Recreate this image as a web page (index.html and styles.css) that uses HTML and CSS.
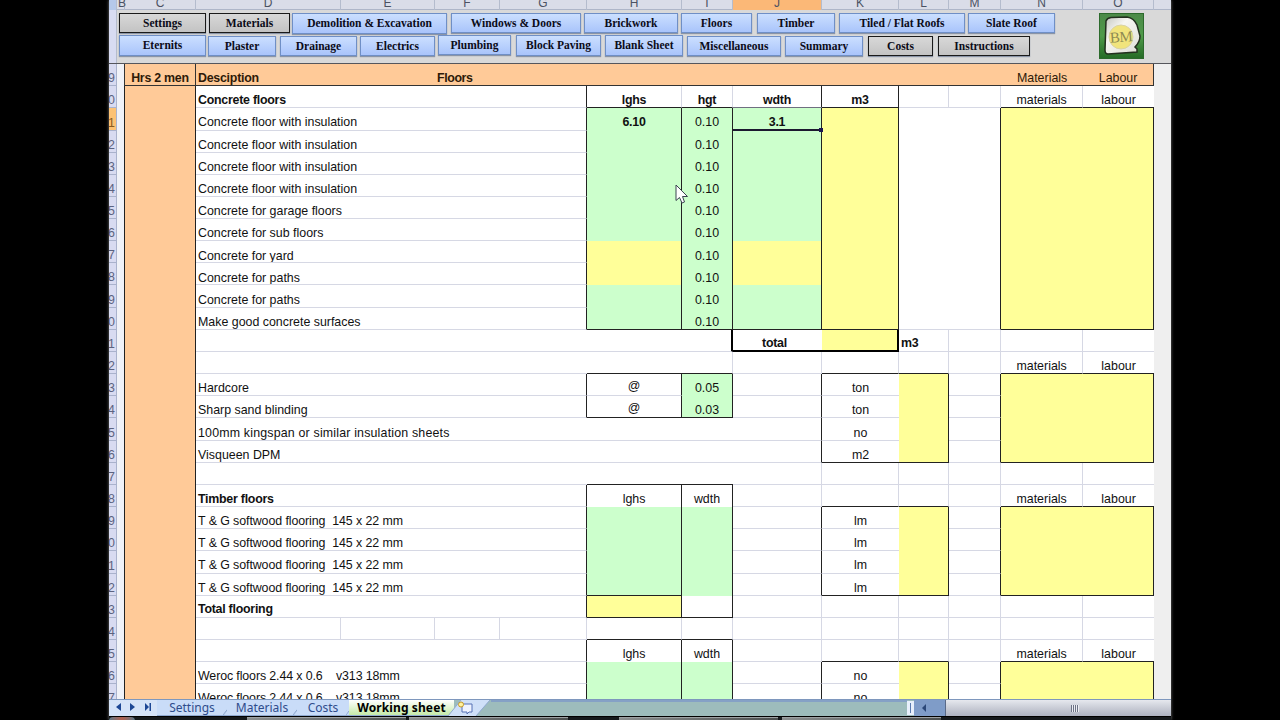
FILE: index.html
```html
<!DOCTYPE html>
<html lang="en">

<head>
    <meta charset="utf-8">
    <title>Working sheet</title>
    <link rel="stylesheet" href="styles.css">
</head>

<body>
    <div class="window">
        <!-- column letters -->
        <div class="letters">
            <span class="wHead"></span><span class="wB">B</span><span class="wC">C</span><span class="wD">D</span><span class="wE">E</span><span class="wF">F</span><span class="wG">G</span><span class="wH">H</span><span class="wI">I</span><span class="wJ active">J</span><span class="wK">K</span><span class="wL">L</span><span class="wM">M</span><span class="wN">N</span><span class="wO">O</span>
        </div>

        <!-- navigation buttons -->
        <div class="toolbar">
            <div class="rowHead"></div>
            <div class="buttons">
                <div class="line">
                    <a class="btn grey b1">Settings</a>
                    <a class="btn grey b2">Materials</a>
                    <a class="btn b3">Demolition &amp; Excavation</a>
                    <a class="btn b4">Windows &amp; Doors</a>
                    <a class="btn b5">Brickwork</a>
                    <a class="btn b6">Floors</a>
                    <a class="btn b7">Timber</a>
                    <a class="btn b8">Tiled / Flat Roofs</a>
                    <a class="btn b9">Slate Roof</a>
                </div>
                <div class="line">
                    <a class="btn b10">Eternits</a>
                    <a class="btn b11">Plaster</a>
                    <a class="btn b12">Drainage</a>
                    <a class="btn b13">Electrics</a>
                    <a class="btn b14">Plumbing</a>
                    <a class="btn b15">Block Paving</a>
                    <a class="btn b16">Blank Sheet</a>
                    <a class="btn b17">Miscellaneous</a>
                    <a class="btn b18">Summary</a>
                    <a class="btn grey b19">Costs</a>
                    <a class="btn grey b20">Instructions</a>
                </div>
            </div>
            <svg class="logo" width="45" height="46" viewBox="0 0 45 46">
                <defs>
                    <linearGradient id="green" x1="0" y1="0" x2="0" y2="1">
                        <stop offset="0" stop-color="#4c8a48" />
                        <stop offset=".5" stop-color="#4f9a4a" />
                        <stop offset="1" stop-color="#256b26" />
                    </linearGradient>
                    <linearGradient id="steel" x1="0" y1="0" x2="1" y2="1">
                        <stop offset="0" stop-color="#c4c6c0" />
                        <stop offset=".35" stop-color="#f6f6f2" />
                        <stop offset="1" stop-color="#dcddd6" />
                    </linearGradient>
                </defs>
                <rect x=".5" y=".5" width="44" height="45" fill="url(#green)" stroke="#2c6a2c" />
                <path d="M7 8Q8 5 12 4.500L28 4Q35 5 38 12L41 23Q41 29 36 34L38 36V39L9 41Q6 41 6 37Z" fill="url(#steel)" stroke="#23301f" stroke-width="1.500" />
                <circle cx="22" cy="24" r="12" fill="#f1e47c" stroke="#d9d3a2" />
                <text x="22" y="29" text-anchor="middle" class="logoText" transform="rotate(-4 22 24)">BM</text>
            </svg>
        </div>

        <!-- sheet -->
        <div class="sheet">
            <table>
                <colgroup>
                    <col class="wHead"><col class="wB"><col class="wC"><col class="wD"><col class="wE"><col class="wF"><col class="wG"><col class="wH"><col class="wI"><col class="wJ"><col class="wK"><col class="wL"><col class="wM"><col class="wN"><col class="wO">
                </colgroup>
                <tr class="title">
                    <th>9</th><td class="b kr"></td><td class="kr">Hrs 2 men</td><td colspan="2" class="left">Desciption</td><td colspan="8" class="left floors">Floors</td><td class="n">Materials</td><td class="n kr">Labour</td>
                </tr>
                <tr>
                    <th>0</th><td class="b kr" rowspan="28"></td><td class="hrs" rowspan="28"></td><td colspan="4" class="left bold kr">Concrete floors</td><td class="bold kb">lghs</td><td class="bold kb">hgt</td><td class="bold kb kr">wdth</td><td class="bold kb kr">m3</td><td></td><td></td><td class="kb">materials</td><td class="kb nr">labour</td>
                </tr>
                <tr class="tall up">
                    <th class="active">1</th><td colspan="4" class="left kr">Concrete floor with insulation</td><td class="g bold kr">6.10</td><td class="g kr">0.10</td><td class="g bold selected kr">3.1<i class="handle"></i></td><td class="y kr kb" rowspan="10"></td><td colspan="2" rowspan="10" class="kr"></td><td colspan="2" rowspan="10" class="y kr kb"></td>
                </tr>
                <tr>
                    <th>2</th><td colspan="4" class="left kr">Concrete floor with insulation</td><td class="g kr" rowspan="5"></td><td class="g kr">0.10</td><td class="g kr" rowspan="5"></td>
                </tr>
                <tr>
                    <th>3</th><td colspan="4" class="left kr">Concrete floor with insulation</td><td class="g kr">0.10</td>
                </tr>
                <tr>
                    <th>4</th><td colspan="4" class="left kr">Concrete floor with insulation</td><td class="g kr">0.10</td>
                </tr>
                <tr>
                    <th>5</th><td colspan="4" class="left kr">Concrete for garage floors</td><td class="g kr">0.10</td>
                </tr>
                <tr>
                    <th>6</th><td colspan="4" class="left kr">Concrete for sub floors</td><td class="g kr">0.10</td>
                </tr>
                <tr>
                    <th>7</th><td colspan="4" class="left kr low">Concrete for yard</td><td class="y kr" rowspan="2"></td><td class="g kr low">0.10</td><td class="y kr" rowspan="2"></td>
                </tr>
                <tr>
                    <th>8</th><td colspan="4" class="left kr low">Concrete for paths</td><td class="g kr low">0.10</td>
                </tr>
                <tr class="tall">
                    <th>9</th><td colspan="4" class="left kr">Concrete for paths</td><td class="g kr kb" rowspan="2"></td><td class="g kr">0.10</td><td class="g kr kb" rowspan="2"></td>
                </tr>
                <tr>
                    <th>0</th><td colspan="4" class="left kr">Make good concrete surfaces</td><td class="g kr kb last">0.10</td>
                </tr>
                <tr class="up">
                    <th>1</th><td colspan="6" class="thickR"></td><td class="bold thickB nr total">total</td><td class="y thickB thickR"></td><td class="left bold">m3</td><td></td><td></td><td class="nr"></td>
                </tr>
                <tr>
                    <th>2</th><td colspan="4" class="nr"></td><td class="nr kb"></td><td class="kb"></td><td></td><td class="kb"></td><td class="kb"></td><td></td><td class="kb">materials</td><td class="kb nr">labour</td>
                </tr>
                <tr>
                    <th>3</th><td colspan="4" class="left kr">Hardcore</td><td class="kr at">@</td><td class="g kr">0.05</td><td class="kr"></td><td class="nr">ton</td><td class="y kr kb" rowspan="4"></td><td class="kr"></td><td colspan="2" rowspan="4" class="y kr kb"></td>
                </tr>
                <tr>
                    <th>4</th><td colspan="4" class="left kr">Sharp sand blinding</td><td class="kr kb at">@</td><td class="g kr kb last">0.03</td><td class="kr"></td><td class="nr">ton</td><td class="kr"></td>
                </tr>
                <tr class="tall">
                    <th>5</th><td colspan="6" class="left nr wide">100mm kingspan or similar insulation sheets</td><td class="kr"></td><td class="nr">no</td><td class="kr"></td>
                </tr>
                <tr>
                    <th>6</th><td colspan="6" class="left nr">Visqueen DPM</td><td class="kr"></td><td class="nr kb">m2</td><td class="kr"></td>
                </tr>
                <tr>
                    <th>7</th><td colspan="4" class="nr"></td><td class="nr kb"></td><td class="nr kb"></td><td></td><td></td><td></td><td></td><td></td><td class="nr"></td>
                </tr>
                <tr>
                    <th>8</th><td colspan="4" class="left bold kr">Timber floors</td><td class="kr nb">lghs</td><td class="kr nb">wdth</td><td></td><td class="kb"></td><td class="kb"></td><td></td><td class="kb">materials</td><td class="kb nr">labour</td>
                </tr>
                <tr>
                    <th>9</th><td colspan="4" class="left kr narrow">T &amp; G softwood flooring&nbsp; 145 x 22 mm</td><td class="g kr kb" rowspan="4"></td><td class="g kr" rowspan="4"></td><td class="kr"></td><td class="nr">lm</td><td class="y kr kb" rowspan="4"></td><td class="kr"></td><td colspan="2" rowspan="4" class="y kr kb"></td>
                </tr>
                <tr>
                    <th>0</th><td colspan="4" class="left kr narrow">T &amp; G softwood flooring&nbsp; 145 x 22 mm</td><td class="kr"></td><td class="nr">lm</td><td class="kr"></td>
                </tr>
                <tr class="tall up">
                    <th>1</th><td colspan="4" class="left kr narrow">T &amp; G softwood flooring&nbsp; 145 x 22 mm</td><td class="kr"></td><td class="nr">lm</td><td class="kr"></td>
                </tr>
                <tr>
                    <th>2</th><td colspan="4" class="left kr narrow">T &amp; G softwood flooring&nbsp; 145 x 22 mm</td><td class="kr"></td><td class="nr kb">lm</td><td class="kr"></td>
                </tr>
                <tr class="up">
                    <th>3</th><td colspan="4" class="left bold kr">Total flooring</td><td class="y kr kb"></td><td class="kr kb"></td><td></td><td></td><td></td><td></td><td></td><td class="nr"></td>
                </tr>
                <tr>
                    <th>4</th><td></td><td></td><td></td><td></td><td class="kb"></td><td class="kb"></td><td></td><td></td><td></td><td></td><td></td><td class="nr"></td>
                </tr>
                <tr>
                    <th>5</th><td colspan="4" class="kr"></td><td class="kr nb">lghs</td><td class="kr nb">wdth</td><td></td><td class="kb"></td><td class="kb"></td><td></td><td class="kb">materials</td><td class="kb nr">labour</td>
                </tr>
                <tr>
                    <th>6</th><td colspan="4" class="left kr narrower">Weroc floors 2.44 x 0.6&nbsp; &nbsp; v313 18mm</td><td class="g kr" rowspan="2"></td><td class="g kr" rowspan="2"></td><td class="kr"></td><td class="nr">no</td><td class="y kr" rowspan="2"></td><td class="kr"></td><td colspan="2" rowspan="2" class="y kr"></td>
                </tr>
                <tr>
                    <th>7</th><td colspan="4" class="left kr narrower">Weroc floors 2.44 x 0.6&nbsp; &nbsp; v313 18mm</td><td class="kr"></td><td class="nr">no</td><td class="kr"></td>
                </tr>
            </table>
        </div>

        <!-- sheet tabs and scrollbar -->
        <div class="tabs">
            <svg class="arrows" width="48" height="16" viewBox="0 0 48 16">
                <path d="M12 3v8l-5-4zM21 3v8l5-4zM36 3v8l4-4zM40.500 3h1.500v8H40.500z" fill="#1d4795" />
            </svg>
            <div class="tab t1">Settings</div>
            <div class="tab t2">Materials</div>
            <div class="tab t3">Costs</div>
            <div class="tab t4 current">Working sheet</div>
            <svg class="newTab" width="43" height="16" viewBox="0 0 43 16">
                <path d="M0 16L13 0H42L28 16z" fill="#cfe0f8" />
                <path d="M0 16L13 0M28 16L42 0" stroke="#8fa9d0" fill="none" />
                <path d="M14 4h10v8h-3l-2 2v-2h-5z" fill="#eef3ff" stroke="#5570b4" />
                <circle cx="13" cy="4.500" r="2.500" fill="#fff2a0" stroke="#c79b27" />
            </svg>
            <div class="space"></div>
            <div class="splitter"></div>
            <div class="scrollLeft"></div>
            <div class="scrollbar"><span></span></div>
        </div>
        <div class="taskbar">
            <div class="start"></div>
            <div class="task k1"></div>
            <div class="task k2"></div>
            <div class="task k3"></div>
            <div class="task k4"></div>
        </div>
    </div>

    <!-- mouse pointer -->
    <svg class="pointer" width="14" height="20" viewBox="0 0 14 20">
        <path d="M1 1V16.500L4.500 13.500L7 19L9.500 18L7.500 12.500H12.500z" fill="#fff" stroke="#3a4450" />
    </svg>
</body>

</html>
```
FILE: styles.css
```css
* {
    margin: 0;
    padding: 0;
    box-sizing: border-box;
}

html,
body {
    height: 720px;
    overflow: hidden;
    background-color: #000;
    font-family: "Liberation Sans", Arial, sans-serif;
    font-size: 12.4px;
    color: #111;
}

.window {
    width: 1062px;
    height: 720px;
    margin-left: 109px;
    background-color: #efefef;
    overflow: hidden;
    box-shadow: 0 0 3px #777;
}

/* column widths */
.wHead, .wB { width: 8px; }
.wC { width: 71px; }
.wD { width: 145px; }
.wE { width: 94px; }
.wF { width: 65px; }
.wG { width: 87px; }
.wH { width: 95px; }
.wI { width: 51px; }
.wJ { width: 89px; }
.wK { width: 77px; }
.wL { width: 50px; }
.wM { width: 52px; }
.wN { width: 82px; }
.wO { width: 71px; }

.letters {
    display: flex;
    height: 10px;
    background-color: #dadde8;
    border-bottom: 1px solid #aeb6c8;
}

.letters span {
    height: 10px;
    line-height: 6px;
    font-size: 12px;
    text-align: center;
    color: #4b5262;
    border-right: 1px solid #b4bccd;
}

.letters .wHead {
    background-color: #b5c8ea;
}

.letters .wB {
    text-indent: 1px;
}

.letters .active {
    background-color: #fbb877;
}

/* toolbar */
.toolbar {
    display: flex;
    height: 54px;
    background-color: #d9d9d9;
    border-bottom: 1px solid #55565c;
}

.toolbar .rowHead {
    width: 8px;
    background-color: #d8dcf2;
    border-right: 1px solid #b4bccd;
}

.toolbar .buttons {
    width: 982px;
    padding: 3px 0 0 2px;
}

.toolbar .line {
    display: flex;
    height: 23px;
}

.btn {
    height: 20px;
    line-height: 18px;
    text-align: center;
    white-space: nowrap;
    font-family: "Liberation Serif", "Times New Roman", serif;
    font-size: 11.5px;
    font-weight: bold;
    color: #0b0b18;
    background-image: linear-gradient(#cbdfff, #a9c4fb);
    border: 1px solid #6f8fc6;
    box-shadow: 0 1px 1px #8a94a6;
}

.btn.grey {
    background-image: linear-gradient(#d8d8d8, #c3c3c3);
    border-color: #1a1a1a;
}

.b1 { width: 87px; }
.b2 { width: 81px; margin-left: 3px; }
.b3 { width: 155px; margin-left: 2px; height: 21px; }
.b4 { width: 130px; margin-left: 4px; }
.b5 { width: 94px; margin-left: 3px; }
.b6 { width: 71px; margin-left: 3px; }
.b7 { width: 78px; margin-left: 5px; }
.b8 { width: 126px; margin-left: 4px; }
.b9 { width: 87px; margin-left: 3px; }
.b10 { width: 87px; margin-top: -1px; height: 21px; }
.b11 { width: 68px; margin-left: 2px; }
.b12 { width: 77px; margin-left: 4px; }
.b13 { width: 75px; margin-left: 3px; }
.b14 { width: 73px; margin-left: 3px; margin-top: -1px; }
.b15 { width: 85px; margin-left: 5px; margin-top: -1px; height: 21px; }
.b16 { width: 78px; margin-left: 4px; margin-top: -1px; height: 21px; }
.b17 { width: 94px; margin-left: 4px; }
.b18 { width: 78px; margin-left: 4px; }
.b19 { width: 65px; margin-left: 5px; }
.b20 { width: 92px; margin-left: 5px; }

.logo {
    margin-top: 3px;
}

.logoText {
    font-family: "Liberation Serif", serif;
    font-size: 15px;
    letter-spacing: -0.5px;
    fill: #8d8a52;
}

/* sheet */
.sheet {
    height: 635px;
    overflow: hidden;
}

table {
    width: 1045px;
    table-layout: fixed;
    border-collapse: separate;
    border-spacing: 0;
    background-color: #fff;
}

tr {
    height: 22px;
}

tr.tall {
    height: 23px;
}

td,
th {
    height: 22px;
    line-height: 14px;
    vertical-align: bottom;
    text-align: center;
    white-space: nowrap;
    overflow: hidden;
    border-right: 1px solid #d6d8e4;
    border-bottom: 1px solid #d6d8e4;
}

.tall td,
.tall th {
    height: 23px;
}

.up td {
    padding-bottom: 1px;
}

th {
    font-weight: normal;
    color: #5c6380;
    background-color: #d8dbf1;
    border-color: #a9b2cc;
    direction: rtl;
    padding-right: 1px;
}

th.active {
    background-color: #fcc274;
    color: #8a5a1d;
}

.left {
    text-align: left;
    padding-left: 2px;
}

.bold {
    font-weight: bold;
    letter-spacing: -0.25px;
}

.wide { letter-spacing: 0.18px; }
.narrow { letter-spacing: -0.08px; }
.narrower { letter-spacing: -0.11px; }

.b {
    background-color: #f0f2f8;
    border-bottom: none;
}

.hrs {
    background-color: #ffca98;
    border-right: 1px solid #222;
}

.g { background-color: #ccffcc; border-bottom: none; padding-bottom: 1px; }
.y { background-color: #ffff99; border-bottom: none; }
.kr { border-right: 1px solid #222; }
.kb { border-bottom: 1px solid #222; }
.nr { border-right: none; }
.nb { border-bottom: none; padding-bottom: 1px; }
.last { padding-bottom: 0; }
.up .g { padding-bottom: 2px; }
.thickR { border-right: 2px solid #000; }
.thickB { border-bottom: 2px solid #000; }
.up .thickB { padding-bottom: 0; }

.title td {
    background-color: #ffca98;
    font-weight: bold;
    letter-spacing: -0.25px;
    border-right: none;
    border-bottom: 1px solid #333;
    color: #2e1a08;
}

.title td.kr {
    border-right: 1px solid #333;
}

.title td.b {
    background-color: #f0f2f8;
    border-bottom: none;
}

.title td.n {
    font-weight: normal;
    letter-spacing: 0;
}

.title td.floors {
    letter-spacing: -0.4px;
}

.low {
    line-height: 12px;
}

.at {
    line-height: 18px;
}

.total {
    padding-right: 6px;
}

.up .selected {
    position: relative;
    overflow: visible;
    padding-bottom: 0;
    border-bottom: 2px solid #1c1830;
    box-shadow: 0 -1px 0 #6f6f80;
}

.handle {
    position: absolute;
    right: -2px;
    bottom: -3px;
    width: 4px;
    height: 4px;
    background-color: #1d1650;
}

/* bottom bars */
.tabs {
    display: flex;
    height: 17px;
    background-color: #9dbcbc;
    border-top: 1px solid #7e97bd;
}

.arrows {
    background-color: #d5e3f8;
}

.tab {
    height: 16px;
    line-height: 15px;
    font-family: "Noto Sans", Tahoma, sans-serif;
    font-size: 12px;
    text-align: center;
    white-space: nowrap;
    color: #2f4c8c;
    background-color: #c9dcf8;
    background-image: linear-gradient(128deg, transparent 94%, #8fa9d0 95%, transparent 97%);
    border-bottom: 1px solid #8fa9d0;
}

.t1 { width: 70px; }
.t2 { width: 70px; }
.t3 { width: 52px; }
.t4 { width: 105px; }

.tab.current {
    font-weight: bold;
    color: #000;
    background-image: linear-gradient(#fff, #c5eaa8);
    letter-spacing: 0.1px;
}

.newTab {
    margin-left: -6px;
}

.space {
    flex: 1;
    border-top: 2px solid #85a1c6;
}

.splitter {
    width: 7px;
    height: 14px;
    margin-top: 1px;
    background-color: #e8f0fc;
    border: 2px solid #e8f0fc;
    border-left-width: 3px;
    box-shadow: inset 1px 0 0 #5b7bb0;
}

.scrollLeft {
    width: 31px;
    background-color: #7f9cc8;
    padding: 4px 0 0 8px;
}

.scrollLeft::before {
    content: '';
    display: block;
    width: 0;
    border: 4px solid transparent;
    border-left: none;
    border-right-color: #2c4878;
}

.scrollbar {
    width: 226px;
    background-image: linear-gradient(#e6e8ee, #c9ccd6 50%, #aeb3c2);
    border-left: 1px solid #5a6a88;
    padding: 5px 0 0 125px;
}

.scrollbar span {
    display: block;
    width: 8px;
    height: 7px;
    background-image: repeating-linear-gradient(90deg, #6d7386 0, #6d7386 1px, #eceef3 1px, #eceef3 2px);
}

.taskbar {
    display: flex;
    height: 4px;
    background-color: #15191c;
    border-top: 1px solid #000;
}

.start {
    width: 26px;
    height: 4px;
    background-image: linear-gradient(90deg, #5c7787, #b2604d, #5c7787);
    border-radius: 12px 12px 0 0;
}

.task {
    height: 3px;
    background-image: linear-gradient(90deg, #8b8f90, #4c5050);
    border-top: 1px solid #9da1a3;
}

.k1 { width: 159px; margin-left: 112px; }
.k2 { width: 159px; margin-left: 3px; }
.k3 { width: 159px; margin-left: 51px; }
.k4 { width: 159px; margin-left: 4px; }

.pointer {
    position: absolute;
    left: 675px;
    top: 184px;
}
```
